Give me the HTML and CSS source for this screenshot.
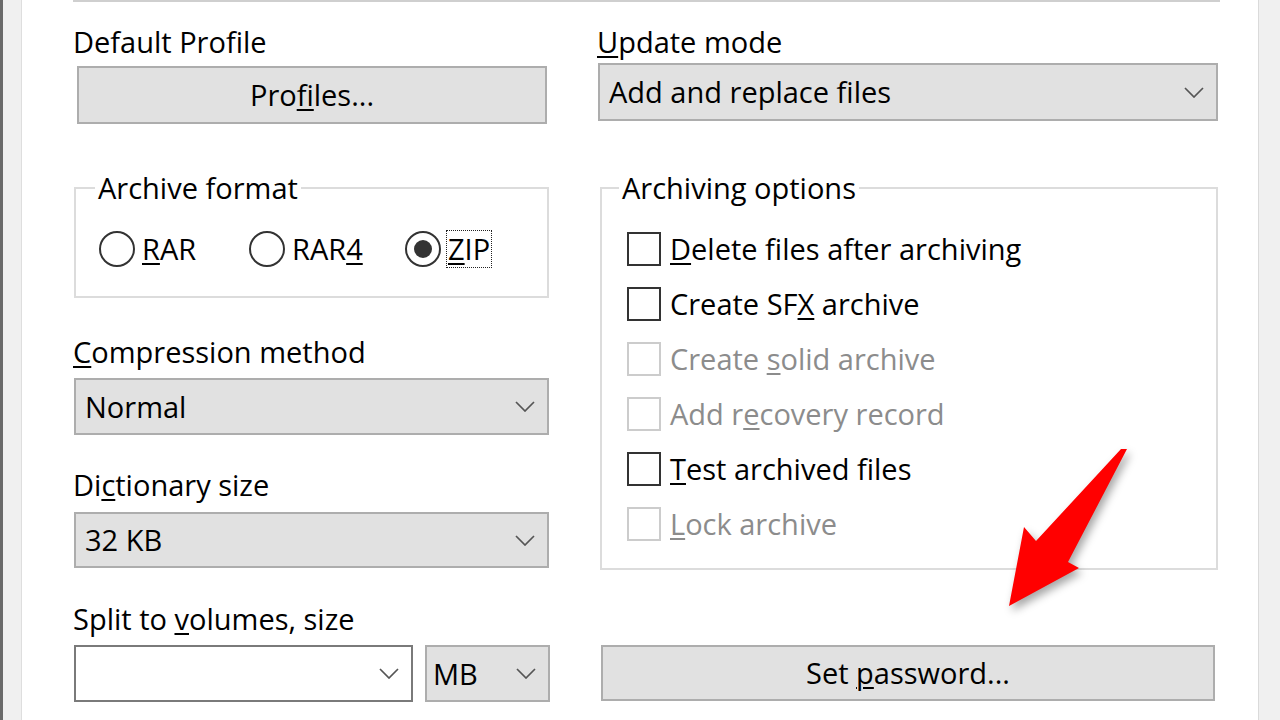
FILE: index.html
```html
<!DOCTYPE html>
<html>
<head>
<meta charset="utf-8">
<link rel="stylesheet" href="styles.css">
</head>
<body>
<div class="window">
  <div class="edge-left"></div>
  <div class="dialog">
    <div class="topline"></div>
    <div class="cols">
      <div class="col col-left">
        <div class="label l-first">Default Profile</div>
        <div class="button btn-profiles"><span>Pro<u>f</u>iles...</span></div>
        <fieldset class="group group-format">
          <legend>Archive format</legend>
          <div class="radios">
            <div class="radio r-rar"><span class="circle"></span><span class="rtext"><u>R</u>AR</span></div>
            <div class="radio r-rar4"><span class="circle"></span><span class="rtext">RAR<u>4</u></span></div>
            <div class="radio r-zip"><span class="circle checked"><span class="inner"></span></span><span class="rtext focus"><u>Z</u>IP</span></div>
          </div>
        </fieldset>
        <div class="label l-comp"><u>C</u>ompression method</div>
        <div class="combo combo-left c-comp"><span>Normal</span><svg class="chev" viewBox="0 0 20 11"><polyline points="1,1 10,10 19,1"/></svg></div>
        <div class="label l-dict">Di<u>c</u>tionary size</div>
        <div class="combo combo-left c-dict"><span>32 KB</span><svg class="chev" viewBox="0 0 20 11"><polyline points="1,1 10,10 19,1"/></svg></div>
        <div class="label l-split">Split to <u>v</u>olumes, size</div>
        <div class="split-row">
          <div class="combo combo-edit"><span></span><svg class="chev" viewBox="0 0 20 11"><polyline points="1,1 10,10 19,1"/></svg></div>
          <div class="combo combo-unit"><span>MB</span><svg class="chev" viewBox="0 0 20 11"><polyline points="1,1 10,10 19,1"/></svg></div>
        </div>
      </div>
      <div class="col col-right">
        <div class="label l-first"><u>U</u>pdate mode</div>
        <div class="combo combo-update"><span>Add and replace files</span><svg class="chev" viewBox="0 0 20 11"><polyline points="1,1 10,10 19,1"/></svg></div>
        <fieldset class="group group-options">
          <legend>Archiving options</legend>
          <div class="check"><span class="box"></span><span><u>D</u>elete files after archiving</span></div>
          <div class="check"><span class="box"></span><span>Create SF<u>X</u> archive</span></div>
          <div class="check disabled"><span class="box"></span><span>Create <u>s</u>olid archive</span></div>
          <div class="check disabled"><span class="box"></span><span>Add r<u>e</u>covery record</span></div>
          <div class="check"><span class="box"></span><span><u>T</u>est archived files</span></div>
          <div class="check disabled"><span class="box"></span><span><u>L</u>ock archive</span></div>
        </fieldset>
        <div class="button btn-password"><span>Set <u>p</u>assword...</span></div>
      </div>
    </div>
  </div>
  <div class="edge-right"></div>
</div>
<svg class="arrow" viewBox="0 0 1280 720" width="1280" height="720">
  <polygon points="1127,449 1068,562 1079,568 1009,606 1024,527 1036,541 1121,449" />
</svg>
</body>
</html>
```

FILE: styles.css
```css
* { box-sizing: border-box; }

html, body {
  margin: 0;
  padding: 0;
  width: 1280px;
  height: 720px;
  overflow: hidden;
  background: #ffffff;
  font-family: "Open Sans", "Noto Sans", sans-serif;
  font-size: 29px;
  color: #000;
}

.window {
  display: flex;
  width: 1280px;
  height: 720px;
  position: relative;
}

.edge-left {
  width: 22px;
  flex: none;
  background: #f0f0f0;
  border-left: 3px solid #6a6a6a;
  border-right: 1px solid #dedede;
}

.edge-right {
  width: 22px;
  flex: none;
  background: #f0f0f0;
  border-left: 1px solid #dadada;
}

.dialog {
  flex: 1;
  padding-left: 51px;
}

.topline {
  width: 1147px;
  height: 2px;
  background: #cfcfcf;
}

.cols {
  display: flex;
  gap: 48px;
}

.col {
  display: flex;
  flex-direction: column;
  align-items: flex-start;
}

.col-left { width: 476px; }
.col-right { width: 621px; }

.label {
  height: 30px;
  line-height: 30px;
  white-space: nowrap;
}

u {
  text-decoration-thickness: 2px;
  text-underline-offset: 3px;
}

.l-first { margin-top: 25px; }
.l-comp { margin-top: 39px; }
.l-dict { margin-top: 35px; }
.l-split { margin-top: 36px; }

.button {
  display: flex;
  align-items: center;
  justify-content: center;
  background: #e1e1e1;
  border: 2px solid #adadad;
  line-height: 30px;
  white-space: nowrap;
}

.btn-profiles {
  margin-top: 9px;
  margin-left: 4px;
  width: 470px;
  height: 58px;
}

.btn-password {
  margin-top: 75px;
  margin-left: 4px;
  width: 614px;
  height: 56px;
}

.combo {
  display: flex;
  align-items: center;
  justify-content: space-between;
  background: #e1e1e1;
  border: 2px solid #adadad;
  padding: 0 12px 0 9px;
  line-height: 30px;
  white-space: nowrap;
}

.chev {
  width: 20px;
  height: 11px;
  flex: none;
}

.chev polyline {
  fill: none;
  stroke: #555;
  stroke-width: 1.7;
}

.combo-left {
  margin-left: 1px;
  width: 475px;
}

.c-comp { margin-top: 11px; height: 57px; }
.c-dict { margin-top: 12px; height: 56px; }

.split-row {
  margin-top: 11px;
  margin-left: 1px;
  display: flex;
  gap: 12px;
}

.combo-edit {
  width: 339px;
  height: 57px;
  background: #ffffff;
  border-color: #7a7a7a;
}

.combo-unit {
  width: 125px;
  height: 57px;
  padding-left: 6px;
}

.combo-update {
  margin-top: 6px;
  margin-left: 1px;
  width: 620px;
  height: 58px;
  padding-left: 9px;
  padding-right: 12px;
}

.group {
  margin: 0;
  min-width: 0;
  border: 2px solid #dcdcdc;
}

.group legend {
  padding: 0 3px;
  height: 30px;
  line-height: 30px;
  white-space: nowrap;
}

.group-format {
  margin-top: 49px;
  margin-left: 1px;
  width: 475px;
  padding: 28px 0 29px 0;
}

.group-format legend { margin-left: 19px; }

.radios {
  display: flex;
  height: 36px;
  align-items: center;
  padding-left: 23px;
}

.radio {
  display: flex;
  align-items: center;
  gap: 7px;
  line-height: 30px;
}

.r-rar { width: 150px; }
.r-rar4 { width: 156px; }

.circle {
  width: 36px;
  height: 36px;
  border: 2px solid #333;
  border-radius: 50%;
  flex: none;
  display: flex;
  align-items: center;
  justify-content: center;
}

.inner {
  width: 18px;
  height: 18px;
  border-radius: 50%;
  background: #333;
}

.focus {
  border: 1px dotted #222;
  padding: 3px 1px;
  margin-left: -2px;
}

.group-options {
  margin-top: 52px;
  margin-left: 3px;
  width: 618px;
  padding: 18px 0 17px 0;
}

.group-options legend { margin-left: 17px; }

.check {
  height: 55px;
  display: flex;
  align-items: center;
  gap: 9px;
  padding-left: 25px;
  line-height: 30px;
  white-space: nowrap;
}

.box {
  width: 34px;
  height: 34px;
  border: 2px solid #333;
  flex: none;
}

.check.disabled { color: #8c8c8c; }
.check.disabled .box { border-color: #cccccc; }

.arrow {
  position: absolute;
  left: 0;
  top: 0;
  pointer-events: none;
}

.arrow polygon {
  fill: #ff0000;
  filter: drop-shadow(3px 5px 4px rgba(0, 0, 0, 0.35));
}
```
